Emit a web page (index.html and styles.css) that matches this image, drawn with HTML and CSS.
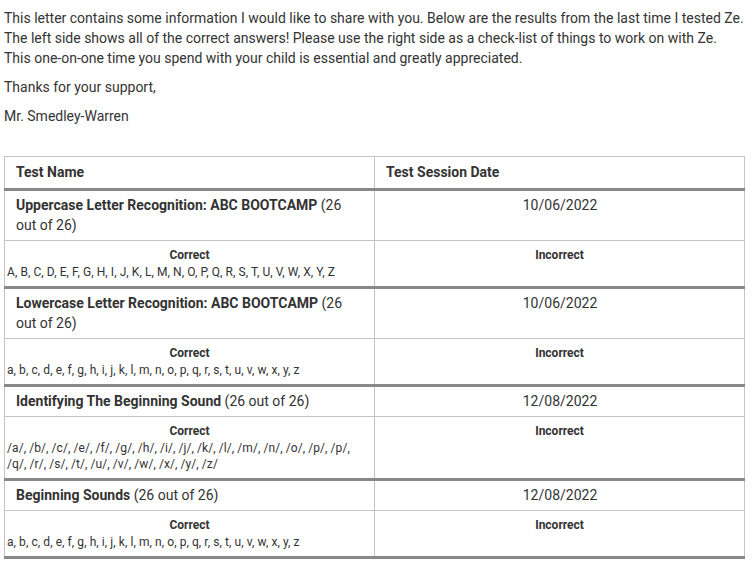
FILE: index.html
```html
<!DOCTYPE html>
<html>
<head>
<meta charset="utf-8">
<link rel="stylesheet" href="styles.css">
</head>
<body>
<div class="letter">
  <p>This letter contains some information I would like to share with you. Below are the results from the last time I tested Ze. The left side shows all of the correct answers! Please use the right side as a check-list of things to work on with Ze. This one-on-one time you spend with your child is essential and greatly appreciated.</p>
  <p>Thanks for your support,</p>
  <p>Mr. Smedley-Warren</p>
</div>
<table class="results">
  <colgroup><col class="col-name"><col class="col-date"></colgroup>
  <thead>
    <tr><th>Test Name</th><th>Test Session Date</th></tr>
  </thead>
  <tbody>
    <tr class="main"><td class="name"><b>Uppercase Letter Recognition: ABC BOOTCAMP</b> (26 out of 26)</td><td class="date">10/06/2022</td></tr>
    <tr class="sub"><td class="correct"><div class="label">Correct</div><div class="list">A, B, C, D, E, F, G, H, I, J, K, L, M, N, O, P, Q, R, S, T, U, V, W, X, Y, Z</div></td><td class="incorrect"><div class="label">Incorrect</div></td></tr>
    <tr class="main"><td class="name"><b>Lowercase Letter Recognition: ABC BOOTCAMP</b> (26 out of 26)</td><td class="date">10/06/2022</td></tr>
    <tr class="sub"><td class="correct"><div class="label">Correct</div><div class="list">a, b, c, d, e, f, g, h, i, j, k, l, m, n, o, p, q, r, s, t, u, v, w, x, y, z</div></td><td class="incorrect"><div class="label">Incorrect</div></td></tr>
    <tr class="main"><td class="name"><b>Identifying The Beginning Sound</b> (26 out of 26)</td><td class="date">12/08/2022</td></tr>
    <tr class="sub"><td class="correct"><div class="label">Correct</div><div class="list">/a/, /b/, /c/, /e/, /f/, /g/, /h/, /i/, /j/, /k/, /l/, /m/, /n/, /o/, /p/, /p/, /q/, /r/, /s/, /t/, /u/, /v/, /w/, /x/, /y/, /z/</div></td><td class="incorrect"><div class="label">Incorrect</div></td></tr>
    <tr class="main"><td class="name"><b>Beginning Sounds</b> (26 out of 26)</td><td class="date">12/08/2022</td></tr>
    <tr class="sub"><td class="correct"><div class="label">Correct</div><div class="list">a, b, c, d, e, f, g, h, i, j, k, l, m, n, o, p, q, r, s, t, u, v, w, x, y, z</div></td><td class="incorrect"><div class="label">Incorrect</div></td></tr>
  </tbody>
</table>
</body>
</html>
```

FILE: styles.css
```css
html, body {
  margin: 0;
  background: #fff;
}
body {
  padding: 8px 11px 0 4px;
  font-family: Roboto, "Liberation Sans", Arial, sans-serif;
  font-size: 14px;
  line-height: 20px;
  color: #333;
}
.letter p {
  margin: 0 0 9px 0;
}
.letter {
  margin-bottom: 30px;
}
.results {
  width: 740px;
  border-collapse: collapse;
  table-layout: fixed;
  border: 1px solid #c4c4c4;
}
.col-name { width: 370px; }
.col-date { width: 370px; }
.results th,
.results td {
  border: 1px solid #c4c4c4;
  vertical-align: top;
}
.results th {
  text-align: left;
  font-weight: 700;
  padding: 5px 10px 6px 11px;
}
.results thead tr {
  border-bottom: 3px solid #888;
}
.results tr.main td {
  padding: 4px 10px 5px 11px;
}
.results tr.main + tr.sub {
  border-bottom: 3px solid #888;
}
.results tr.sub:last-child {
  border-bottom: 1px solid #c4c4c4;
}
.results td.date {
  text-align: center;
}
.results tr.sub td {
  padding: 6px 2px 6px 2px;
  font-size: 12px;
  line-height: 16px;
}
.label {
  text-align: center;
  font-weight: 700;
  margin-bottom: 1px;
}
.list {
  text-align: left;
  letter-spacing: 0.08px;
  padding-right: 20px;
}
b { font-weight: 700; }
```
